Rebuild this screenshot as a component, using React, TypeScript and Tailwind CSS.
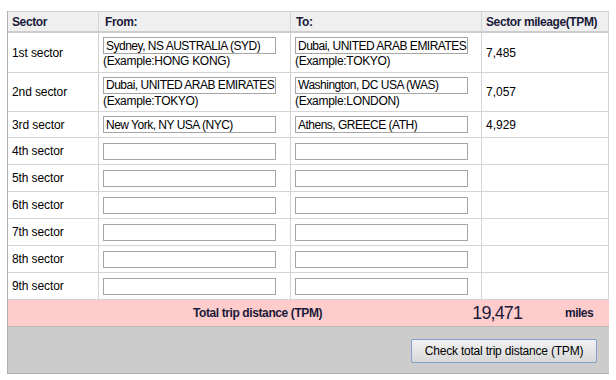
import React from "react";

const rows: { label: string; from: string; fromEx?: string; to: string; toEx?: string; miles: string; h: string }[] = [
  { label: "1st sector", from: "Sydney, NS AUSTRALIA (SYD)", fromEx: "(Example:HONG KONG)", to: "Dubai, UNITED ARAB EMIRATES", toEx: "(Example:TOKYO)", miles: "7,485", h: "h-[40px]" },
  { label: "2nd sector", from: "Dubai, UNITED ARAB EMIRATES", fromEx: "(Example:TOKYO)", to: "Washington, DC USA (WAS)", toEx: "(Example:LONDON)", miles: "7,057", h: "h-[39px]" },
  { label: "3rd sector", from: "New York, NY USA (NYC)", to: "Athens, GREECE (ATH)", miles: "4,929", h: "h-[26px]" },
  { label: "4th sector", from: "", to: "", miles: "", h: "h-[27px]" },
  { label: "5th sector", from: "", to: "", miles: "", h: "h-[27px]" },
  { label: "6th sector", from: "", to: "", miles: "", h: "h-[27px]" },
  { label: "7th sector", from: "", to: "", miles: "", h: "h-[27px]" },
  { label: "8th sector", from: "", to: "", miles: "", h: "h-[27px]" },
  { label: "9th sector", from: "", to: "", miles: "", h: "h-[27px]" },
];

function Field({ value, ex }: { value: string; ex?: string }) {
  return (
    <div className="flex flex-col">
      <input
        readOnly
        value={value}
        className="w-[173px] h-[17px] border border-[#a5a5a5] bg-white pl-[2px] pr-0 text-[12px] leading-[15px] tracking-[-0.5px] text-black outline-none"
      />
      {ex && <div className="text-[12px] leading-[13px] tracking-[-0.3px] text-black mt-[1px]">{ex}</div>}
    </div>
  );
}

export default function App() {
  return (
    <div className="w-[616px] h-[380px] bg-white pt-[11px] pl-[7px] text-[12px] text-black" style={{ fontFamily: '"Liberation Sans", Arial, sans-serif' }}>
      <div className="w-[602px] border-l border-[#b0b0b0]">
        <div className="grid grid-cols-[90px_192px_191px_128px] h-[22px] bg-[#efefef] border-t border-[#d0d0d0] border-b-2 border-b-[#cccccc] font-bold tracking-[-0.4px] text-[#1a1a3a]">
          <div className="pl-[4px] flex items-center">Sector</div>
          <div className="pl-[6px] flex items-center border-l border-[#d4d4d4]">From:</div>
          <div className="pl-[5px] flex items-center border-l border-[#d4d4d4]">To:</div>
          <div className="pl-[4px] flex items-center border-l border-[#d4d4d4] border-r border-r-[#d4d4d4]">Sector mileage(TPM)</div>
        </div>
        {rows.map((r) => (
          <div key={r.label} className={`grid grid-cols-[90px_192px_191px_128px] ${r.h} border-b border-[#d4d4d4]`}>
            <div className="pl-[4px] flex items-center tracking-[-0.1px]">{r.label}</div>
            <div className="pl-[4px] flex items-center border-l border-[#d4d4d4]">
              <Field value={r.from} ex={r.fromEx} />
            </div>
            <div className="pl-[4px] flex items-center border-l border-[#d4d4d4]">
              <Field value={r.to} ex={r.toEx} />
            </div>
            <div className="pl-[4px] flex items-center border-l border-[#d4d4d4] border-r border-r-[#d4d4d4]">{r.miles}</div>
          </div>
        ))}
        <div className="h-[27px] bg-[#ffcccc] flex items-center border-b border-[#b8b8b8]">
          <div className="pl-[185px] w-[460px] font-bold tracking-[-0.4px] text-[#1a1a3a]">Total trip distance (TPM)</div>
          <div className="text-[18px] tracking-[-0.9px] text-[#1a1a3a] w-[54px] text-right">19,471</div>
          <div className="ml-[43px] font-bold tracking-[-0.5px] text-[#1a1a3a]">miles</div>
        </div>
        <div className="h-[47px] bg-[#cccccc] flex items-center justify-end pr-[12px] border-b border-[#b0b0b0]">
          <button className="w-[186px] h-[24px] border border-[#7da2ce] rounded-[2px] bg-gradient-to-b from-[#f2f2f2] to-[#d8d8d8] text-[12px] tracking-[-0.2px] text-black mt-[2px]">
            Check total trip distance (TPM)
          </button>
        </div>
      </div>
    </div>
  );
}
